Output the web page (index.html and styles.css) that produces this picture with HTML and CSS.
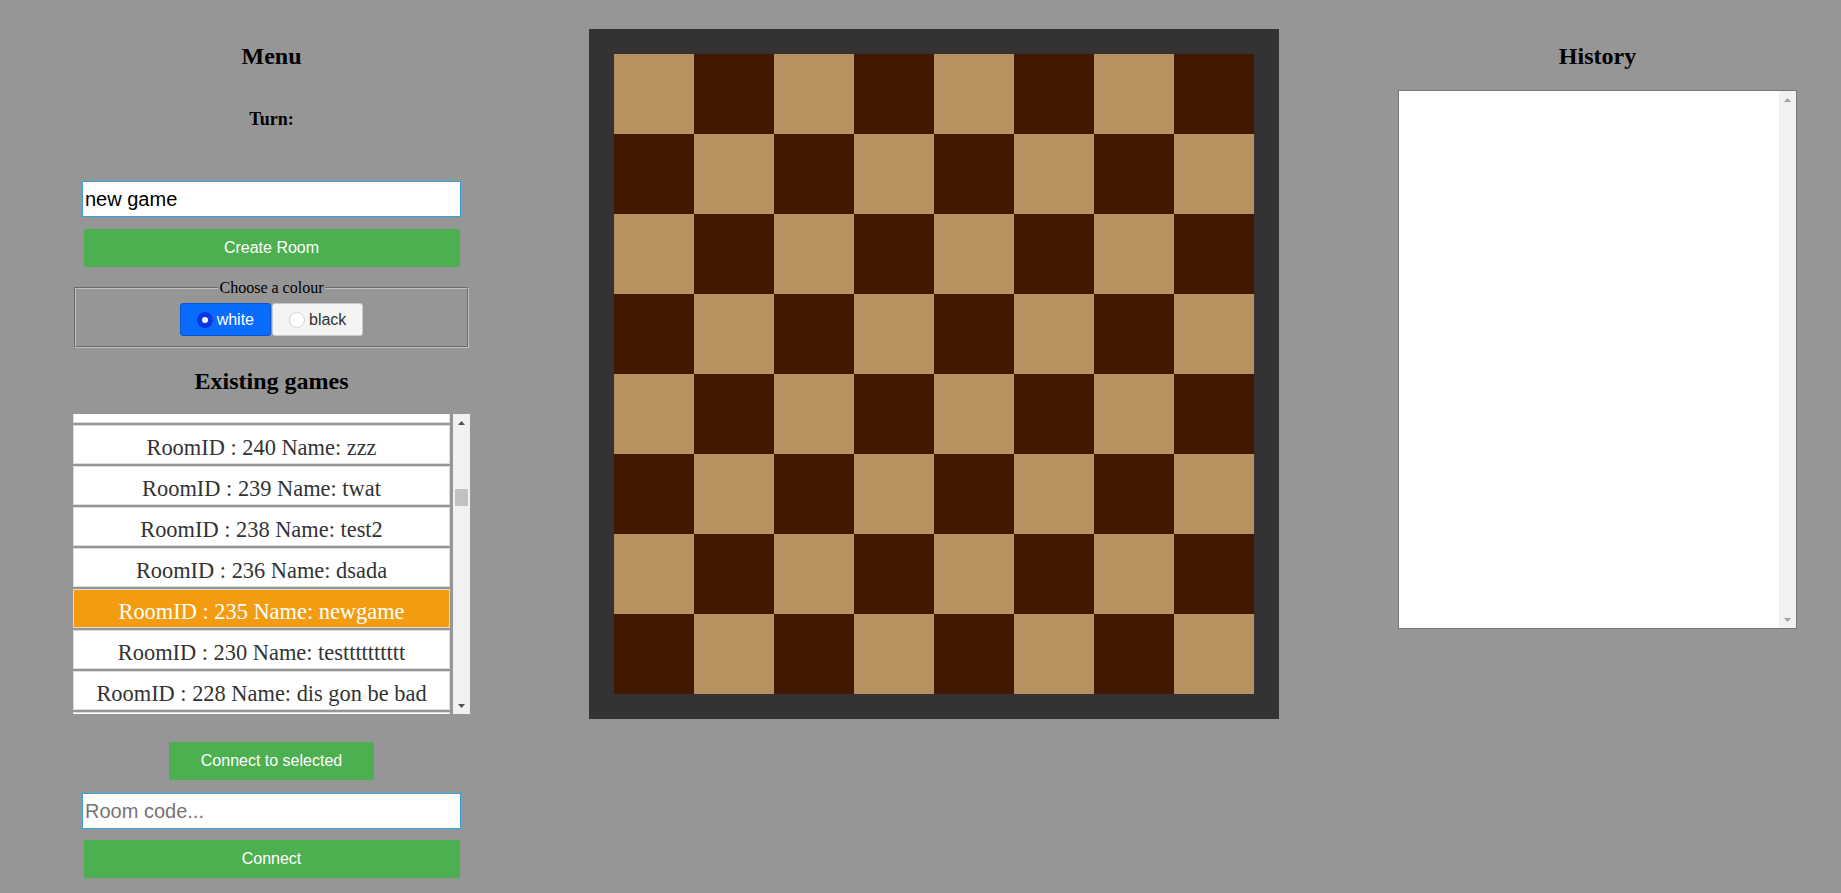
FILE: index.html
```html
<!DOCTYPE html>
<html lang="en">
<head>
<meta charset="utf-8">
<title>Chess</title>
<link rel="stylesheet" href="styles.css">
</head>
<body>
<div class="page">
  <section class="menu">
    <h2 class="title">Menu</h2>
    <h3 class="turn">Turn:</h3>
    <input class="field field-name" type="text" value="new game">
    <button class="btn btn-wide btn-create">Create Room</button>
    <fieldset class="colour">
      <legend>Choose a colour</legend>
      <div class="toggle">
        <label class="opt on"><span class="dot"></span>white</label>
        <label class="opt"><span class="dot"></span>black</label>
      </div>
    </fieldset>
    <h2 class="title games-title">Existing games</h2>
    <div class="games">
      <div class="games-view">
        <div class="games-list">
          <div class="game game-blank"></div>
          <div class="game">RoomID : 240 Name: zzz</div>
          <div class="game">RoomID : 239 Name: twat</div>
          <div class="game">RoomID : 238 Name: test2</div>
          <div class="game">RoomID : 236 Name: dsada</div>
          <div class="game sel">RoomID : 235 Name: newgame</div>
          <div class="game">RoomID : 230 Name: testttttttttt</div>
          <div class="game">RoomID : 228 Name: dis gon be bad</div>
          <div class="game game-blank"></div>
        </div>
      </div>
      <div class="sbar">
        <div class="sbar-btn"><svg viewBox="0 0 7 4"><polygon points="3.5,0 7,4 0,4"/></svg></div>
        <div class="sbar-gap"></div>
        <div class="sbar-thumb"></div>
        <div class="sbar-fill"></div>
        <div class="sbar-btn"><svg viewBox="0 0 7 4"><polygon points="0,0 7,0 3.5,4"/></svg></div>
      </div>
    </div>
    <button class="btn btn-narrow btn-select">Connect to selected</button>
    <input class="field field-code" type="text" placeholder="Room code...">
    <button class="btn btn-wide btn-connect">Connect</button>
  </section>

  <section class="board-col">
    <div class="board">
      <div class="sq l"></div><div class="sq d"></div><div class="sq l"></div><div class="sq d"></div><div class="sq l"></div><div class="sq d"></div><div class="sq l"></div><div class="sq d"></div>
      <div class="sq d"></div><div class="sq l"></div><div class="sq d"></div><div class="sq l"></div><div class="sq d"></div><div class="sq l"></div><div class="sq d"></div><div class="sq l"></div>
      <div class="sq l"></div><div class="sq d"></div><div class="sq l"></div><div class="sq d"></div><div class="sq l"></div><div class="sq d"></div><div class="sq l"></div><div class="sq d"></div>
      <div class="sq d"></div><div class="sq l"></div><div class="sq d"></div><div class="sq l"></div><div class="sq d"></div><div class="sq l"></div><div class="sq d"></div><div class="sq l"></div>
      <div class="sq l"></div><div class="sq d"></div><div class="sq l"></div><div class="sq d"></div><div class="sq l"></div><div class="sq d"></div><div class="sq l"></div><div class="sq d"></div>
      <div class="sq d"></div><div class="sq l"></div><div class="sq d"></div><div class="sq l"></div><div class="sq d"></div><div class="sq l"></div><div class="sq d"></div><div class="sq l"></div>
      <div class="sq l"></div><div class="sq d"></div><div class="sq l"></div><div class="sq d"></div><div class="sq l"></div><div class="sq d"></div><div class="sq l"></div><div class="sq d"></div>
      <div class="sq d"></div><div class="sq l"></div><div class="sq d"></div><div class="sq l"></div><div class="sq d"></div><div class="sq l"></div><div class="sq d"></div><div class="sq l"></div>
    </div>
  </section>

  <section class="history">
    <h2 class="title">History</h2>
    <div class="log">
      <div class="log-body"></div>
      <div class="sbar sbar-off">
        <div class="sbar-btn"><svg viewBox="0 0 7 4"><polygon points="3.5,0 7,4 0,4"/></svg></div>
        <div class="sbar-fill"></div>
        <div class="sbar-btn"><svg viewBox="0 0 7 4"><polygon points="0,0 7,0 3.5,4"/></svg></div>
      </div>
    </div>
  </section>
</div>
</body>
</html>
```

FILE: styles.css
```css
* { box-sizing: border-box; }

html, body {
  margin: 0;
  padding: 0;
}

body {
  background: #969696;
  font-family: "Liberation Serif", "Times New Roman", serif;
  color: #000;
  min-height: 100vh;
}

.page {
  display: grid;
  grid-template-columns: 399px 690px 400px;
  column-gap: 118px;
  padding-left: 72px;
  align-items: start;
}

/* ---------- left menu ---------- */
.menu {
  padding-top: 42px;
  display: flex;
  flex-direction: column;
  align-items: center;
}

.title {
  margin: 0;
  font-size: 24px;
  line-height: 28px;
  font-weight: bold;
  text-align: center;
}

.turn {
  margin: 39px 0 0;
  font-size: 18px;
  line-height: 21px;
  font-weight: bold;
}

.field {
  display: block;
  width: 379px;
  height: 36px;
  padding: 0 2px;
  border: 1px solid #3aa0dc;
  border-radius: 0;
  background: #fff;
  font-family: "Liberation Sans", Arial, sans-serif;
  font-size: 20px;
  color: #000;
  outline: none;
}

.field::placeholder { color: #757575; }

.field-name { margin-top: 51px; }
.field-code { margin-top: 13px; }

.btn {
  display: block;
  height: 38px;
  padding: 0;
  border: 0;
  background: #4caf50;
  color: #fff;
  font-family: "Liberation Sans", Arial, sans-serif;
  font-size: 16px;
  cursor: pointer;
}

.btn-wide { width: 376px; }
.btn-narrow { padding: 0 32px; }

.btn-create { margin-top: 12px; }
.btn-select { margin-top: 28px; }
.btn-connect { margin-top: 11px; }

.colour {
  width: 395px;
  min-width: 0;
  margin: 12px 0 0;
  padding: 6px 12px 10px;
  border: 2px groove rgb(192, 192, 192);
}

.colour legend {
  margin: 0 auto;
  padding: 0 2px;
  font-size: 16px;
  line-height: 18px;
}

.toggle {
  display: flex;
  justify-content: center;
  gap: 1px;
}

.opt {
  display: flex;
  align-items: center;
  gap: 4px;
  height: 33px;
  padding: 0 16px;
  border: 1px solid #c9c9c9;
  border-radius: 3px;
  background: #f4f4f4;
  color: #333;
  font-family: "Liberation Sans", Arial, sans-serif;
  font-size: 16px;
}

.opt.on {
  background: #0a6cff;
  border-color: #0a56d2;
  color: #fff;
}

.dot {
  width: 16px;
  height: 16px;
  border-radius: 50%;
  background: #fff;
  border: 1px solid #d6d6d6;
}

.opt.on .dot { border: 5px solid #0a36e6; }

.games-title { margin-top: 19px; }

.games {
  display: flex;
  gap: 3px;
  width: 397px;
  height: 300px;
  margin-top: 19px;
}

.games-view {
  width: 377px;
  height: 300px;
  overflow: hidden;
}

.games-list { margin-top: -30px; }

.game {
  margin-bottom: 2px;
  padding: 8.5px 0 3.5px;
  line-height: 25px;
  border: 1px solid #dcdcdc;
  background: #fff;
  color: #333;
  font-size: 22.4px;
  text-align: center;
  white-space: nowrap;
}

.game-blank { height: 39px; }

.game.sel {
  background: #f39c12;
  color: #fff;
}

/* ---------- fake scrollbars ---------- */
.sbar {
  width: 17px;
  flex: none;
  display: flex;
  flex-direction: column;
  background: #f1f1f1;
}

.sbar-btn {
  height: 17px;
  display: flex;
  align-items: center;
  justify-content: center;
}

.sbar-btn svg {
  width: 7px;
  height: 4px;
  fill: #505050;
}

.sbar-gap { height: 58px; }

.sbar-thumb {
  height: 17px;
  margin: 0 2px;
  background: #c1c1c1;
}

.sbar-fill { flex: 1; }

.sbar-off .sbar-btn svg { fill: #a3a3a3; }

/* ---------- board ---------- */
.board {
  margin-top: 29px;
  width: 690px;
  display: grid;
  grid-template-columns: repeat(8, 80px);
  grid-auto-rows: 80px;
  border: 25px solid #333;
}

.sq.l { background: #b79160; }
.sq.d { background: #421800; }

/* ---------- history ---------- */
.history {
  padding-top: 42px;
  margin-left: 1px;
}

.log {
  display: flex;
  height: 539px;
  margin-top: 20px;
  border: 1px solid #767676;
  background: #fff;
}

.log-body { flex: 1; }
```
